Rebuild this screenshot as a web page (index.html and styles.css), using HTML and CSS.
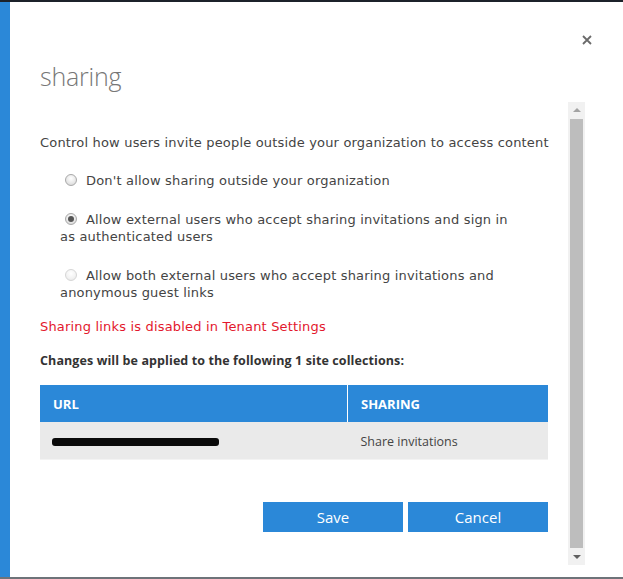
FILE: index.html
```html
<!DOCTYPE html>
<html>
<head>
<meta charset="utf-8">
<link rel="stylesheet" href="styles.css">
</head>
<body>
<div class="topbar"></div>
<div class="frame">
  <div class="accent"></div>
  <div class="dialog">
    <div class="header">
      <h1 class="title">sharing</h1>
      <button class="close" aria-label="Close">
        <svg width="10" height="10" viewBox="0 0 10 10"><path d="M1 1L9 9M9 1L1 9" stroke="#6a6a6a" stroke-width="1.8" fill="none"/></svg>
      </button>
    </div>
    <div class="scrollarea">
      <div class="content">
        <p class="intro">Control how users invite people outside your organization to access content</p>
        <div class="option first"><span class="radio"></span>Don't allow sharing outside your organization</div>
        <div class="option"><span class="radio checked"></span>Allow external users who accept sharing invitations and sign in as authenticated users</div>
        <div class="option"><span class="radio disabled"></span>Allow both external users who accept sharing invitations and anonymous guest links</div>
        <p class="error">Sharing links is disabled in Tenant Settings</p>
        <p class="summary">Changes will be applied to the following 1 site collections:</p>
        <table class="sites">
          <thead>
            <tr><th class="col-url">URL</th><th class="col-share">SHARING</th></tr>
          </thead>
          <tbody>
            <tr><td class="col-url"><span class="redacted"></span></td><td class="col-share">Share invitations</td></tr>
          </tbody>
        </table>
        <div class="actions">
          <button class="btn">Save</button>
          <button class="btn">Cancel</button>
        </div>
      </div>
      <div class="scrollbar">
        <div class="arrow up"></div>
        <div class="thumb"></div>
        <div class="arrow down"></div>
      </div>
    </div>
  </div>
</div>
<div class="bottombar"></div>
</body>
</html>
```
FILE: styles.css
```css
html, body {
  margin: 0;
  padding: 0;
  background: #ffffff;
}
body {
  width: 623px;
  height: 579px;
  overflow: hidden;
  font-family: "DejaVu Sans", Verdana, sans-serif;
  color: #444444;
  display: flex;
  flex-direction: column;
}
.topbar {
  height: 2px;
  background: #1c222a;
  flex: none;
}
.bottombar {
  height: 2px;
  background: #6e7379;
  flex: none;
}
.frame {
  flex: 1;
  display: flex;
}
.accent {
  width: 10px;
  background: #2b88d8;
  flex: none;
}
.dialog {
  flex: 1;
  display: flex;
  flex-direction: column;
}
.header {
  height: 100px;
  display: flex;
  justify-content: space-between;
  align-items: flex-start;
}
.title {
  margin: 57px 0 0 30px;
  font-family: "Open Sans", sans-serif;
  font-weight: 300;
  font-size: 25px;
  letter-spacing: -0.2px;
  line-height: 34px;
  color: #777777;
}
.close {
  margin: 33px 31px 0 0;
  padding: 0;
  width: 10px;
  height: 10px;
  border: 0;
  background: transparent;
  display: flex;
}
.scrollarea {
  display: flex;
  height: 463px;
}
.content {
  width: 508px;
  margin-left: 30px;
  padding-top: 32px;
  font-size: 13px;
  letter-spacing: 0.18px;
  line-height: 17px;
}
.intro {
  margin: 0;
  white-space: nowrap;
}
.option {
  padding-left: 20px;
  padding-right: 30px;
  margin-top: 22px;
}
.option.first {
  margin-top: 21px;
}
.radio {
  display: inline-block;
  width: 10px;
  height: 10px;
  border: 1px solid #a9a9a9;
  border-radius: 50%;
  background: radial-gradient(circle at 50% 35%, #ffffff 0%, #e8e8e8 55%, #cfcfcf 100%);
  margin: 0 9px 0 5px;
  vertical-align: -1px;
  position: relative;
}
.radio.checked::after {
  content: "";
  position: absolute;
  left: 2px;
  top: 2px;
  width: 6px;
  height: 6px;
  border-radius: 50%;
  background: #555555;
}
.radio.disabled {
  border-color: #d6d6d6;
  background: radial-gradient(circle at 50% 35%, #ffffff 0%, #f2f2f2 60%, #e4e4e4 100%);
}
.error {
  margin: 17px 0 0;
  color: #e3182d;
}
.summary {
  margin: 17px 0 0;
  font-family: "Open Sans", sans-serif;
  font-weight: 700;
  font-size: 12.5px;
  letter-spacing: 0.1px;
  color: #333333;
}
.sites {
  margin-top: 16px;
  width: 508px;
  border-collapse: collapse;
  font-family: "Open Sans", sans-serif;
  letter-spacing: 0;
}
.sites th {
  background: #2b88d8;
  color: #ffffff;
  font-weight: 700;
  font-size: 13px;
  text-align: left;
  height: 36px;
  padding: 1px 0 0 13px;
}
.sites th.col-url {
  width: 294px;
  border-right: 1px solid #ffffff;
}
.sites td {
  background: #eaeaea;
  height: 35px;
  padding: 2px 0 0 13px;
  font-size: 12.5px;
  color: #444444;
  border-bottom: 1px solid #f3f3f3;
}
.sites td.col-url {
  padding-left: 12px;
}
.redacted {
  display: block;
  width: 167px;
  height: 8px;
  background: #0a0a0a;
  border-radius: 3px;
  margin-top: 1px;
}
.actions {
  margin-top: 42px;
  display: flex;
  justify-content: flex-end;
  gap: 5px;
}
.btn {
  width: 140px;
  height: 30px;
  border: 0;
  padding: 0;
  background: #2b88d8;
  color: #ffffff;
  font-family: "Open Sans", sans-serif;
  font-size: 15px;
}
.scrollbar {
  width: 17px;
  margin-left: 20px;
  background: #f1f1f1;
  display: flex;
  flex-direction: column;
  align-items: center;
}
.arrow {
  width: 0;
  height: 0;
  border-left: 4px solid transparent;
  border-right: 4px solid transparent;
}
.arrow.up {
  border-bottom: 4px solid #a3a3a3;
  margin: 6px 0 7px;
}
.thumb {
  width: 13px;
  height: 429px;
  background: #bdbdbd;
}
.arrow.down {
  border-top: 4px solid #606060;
  margin-top: 7px;
}
```
